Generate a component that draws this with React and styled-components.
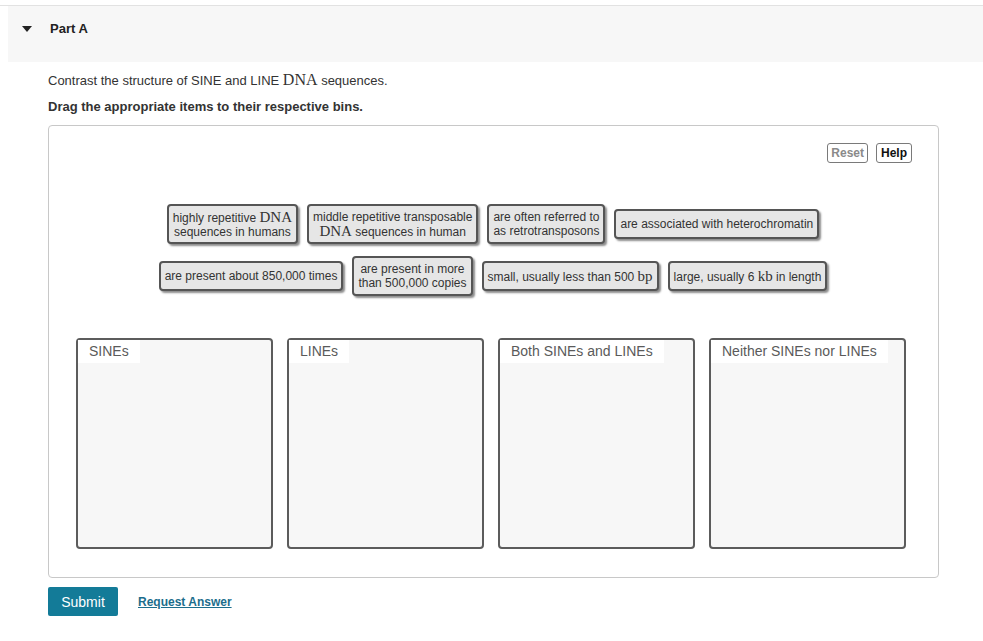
import React from "react";
import styled, { createGlobalStyle } from "styled-components";

const GlobalStyle = createGlobalStyle`
  body {
    margin: 0;
    background: #fff;
    font-family: "Liberation Sans", Arial, sans-serif;
    color: #333;
  }
`;

const Page = styled.div`
  padding-top: 5px;
  width: 983px;
`;

const TopRule = styled.div`
  height: 1px;
  background: #e2e2e2;
`;

const Header = styled.div`
  box-sizing: border-box;
  margin-left: 8px;
  height: 56px;
  background: #f7f7f7;
  display: flex;
  align-items: flex-start;
  padding: 16px 0 0 14px;
`;

const Caret = styled.span`
  width: 0;
  height: 0;
  border-left: 5px solid transparent;
  border-right: 5px solid transparent;
  border-top: 6px solid #222;
  margin-right: 18px;
  margin-top: 4px;
`;

const PartTitle = styled.h2`
  margin: 0;
  font-size: 13px;
  line-height: 14px;
  font-weight: 700;
  color: #222;
`;

const Content = styled.div`
  padding: 10px 0 0 48px;
`;

const Prompt = styled.p`
  margin: 0 0 10px;
  font-size: 13px;
  line-height: 16px;
  color: #333;
  font-weight: ${(p) => (p.bold ? 700 : 400)};
`;

const Math = styled.span`
  font-family: "Liberation Serif", "Times New Roman", serif;
  font-size: ${(p) => p.size || 16}px;
  font-weight: 400;
`;

const Board = styled.div`
  box-sizing: border-box;
  width: 891px;
  height: 453px;
  border: 1px solid #c8c8c8;
  border-radius: 4px;
  padding: 17px 26px 0 27px;
  display: flex;
  flex-direction: column;
`;

const Toolbar = styled.div`
  display: flex;
  justify-content: flex-end;
  gap: 8px;
`;

const ToolButton = styled.button`
  box-sizing: border-box;
  height: 20px;
  padding: 0 ${(p) => (p.muted ? 3 : 4)}px;
  background: #fff;
  border: 1px solid #7a7a7a;
  border-radius: 3px;
  font-family: "Liberation Sans", Arial, sans-serif;
  font-size: 12px;
  font-weight: 700;
  color: ${(p) => (p.muted ? "#8a8a8a" : "#111")};
`;

const Tray = styled.div`
  margin-top: 41px;
  display: flex;
  flex-direction: column;
  gap: 12px;
  margin-right: 2px;
`;

const ChipRow = styled.div`
  display: flex;
  justify-content: center;
  align-items: center;
  gap: 9px;
`;

const Chip = styled.div`
  box-sizing: border-box;
  min-height: ${(p) => (p.tall ? 40 : 30)}px;
  display: flex;
  align-items: center;
  justify-content: center;
  text-align: center;
  padding: 3px 4px;
  background: #e6e6e6;
  border: 2px solid #555;
  border-radius: 4px;
  box-shadow: 2px 2px 2px rgba(0, 0, 0, 0.45);
  font-size: 12px;
  line-height: 14px;
  color: #333;
  white-space: nowrap;
`;

const Bins = styled.div`
  margin-top: 42px;
  display: flex;
  justify-content: center;
  gap: 14px;
  margin-right: 6px;
`;

const Bin = styled.div`
  box-sizing: border-box;
  width: 197px;
  height: 211px;
  background: #f7f7f7;
  border: 2px solid #5c5c5c;
  border-radius: 4px;
`;

const BinLabel = styled.span`
  display: inline-block;
  background: #fff;
  padding: 3px 11px 4px 11px;
  font-size: 14px;
  line-height: 16px;
  color: #5a5a5a;
`;

const Actions = styled.div`
  display: flex;
  align-items: center;
  gap: 20px;
  margin-top: 9px;
`;

const Submit = styled.button`
  width: 70px;
  height: 29px;
  border: none;
  border-radius: 2px;
  background: #137b98;
  color: #fff;
  font-family: "Liberation Sans", Arial, sans-serif;
  font-size: 14px;
`;

const Link = styled.a`
  font-size: 12px;
  font-weight: 700;
  color: #1c6d8c;
  text-decoration: underline;
`;

const rowOne = [
  <>highly repetitive <Math size={15}>DNA</Math><br />sequences in humans</>,
  <>middle repetitive transposable<br /><Math size={15}>DNA</Math> sequences in human</>,
  <>are often referred to<br />as retrotransposons</>,
  <>are associated with heterochromatin</>,
];

const rowTwo = [
  <>are present about 850,000 times</>,
  <>are present in more<br />than 500,000 copies</>,
  <>small, usually less than 500 <Math size={15}>bp</Math></>,
  <>large, usually 6 <Math size={15}>kb</Math> in length</>,
];

const bins = ["SINEs", "LINEs", "Both SINEs and LINEs", "Neither SINEs nor LINEs"];

export default function App() {
  return (
    <Page>
      <GlobalStyle />
      <TopRule />
      <Header>
        <Caret />
        <PartTitle>Part A</PartTitle>
      </Header>
      <Content>
        <Prompt>
          Contrast the structure of SINE and LINE <Math>DNA</Math> sequences.
        </Prompt>
        <Prompt bold>Drag the appropriate items to their respective bins.</Prompt>
        <Board>
          <Toolbar>
            <ToolButton muted>Reset</ToolButton>
            <ToolButton>Help</ToolButton>
          </Toolbar>
          <Tray>
            <ChipRow>
              {rowOne.map((c, i) => (
                <Chip key={i} tall={i < 3}>
                  <span>{c}</span>
                </Chip>
              ))}
            </ChipRow>
            <ChipRow>
              {rowTwo.map((c, i) => (
                <Chip key={i} tall={i === 1}>
                  <span>{c}</span>
                </Chip>
              ))}
            </ChipRow>
          </Tray>
          <Bins>
            {bins.map((b) => (
              <Bin key={b}>
                <BinLabel>{b}</BinLabel>
              </Bin>
            ))}
          </Bins>
        </Board>
        <Actions>
          <Submit>Submit</Submit>
          <Link href="#">Request Answer</Link>
        </Actions>
      </Content>
    </Page>
  );
}
